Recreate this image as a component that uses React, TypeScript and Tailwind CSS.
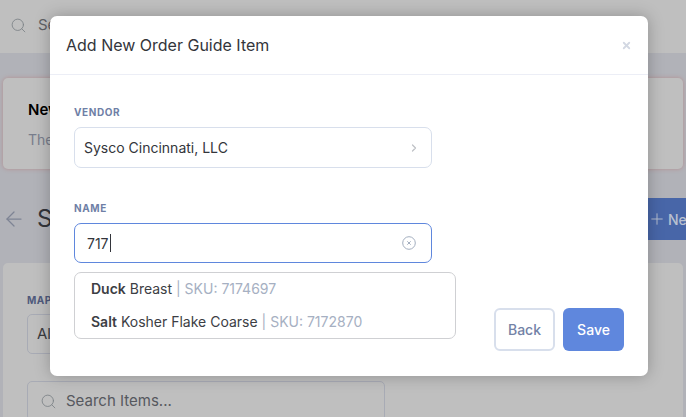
import { Search, ArrowLeft, Plus, ChevronRight, X } from "lucide-react";

const font = { };

function Background() {
  return (
    <div className="h-[417px] w-[686px] overflow-hidden bg-[#b1b2b8] font-['Inter',sans-serif]">
      {/* top search bar */}
      <div className="flex h-[53px] items-center gap-[11px] bg-[#bfbfbf] pb-[2px] pl-[10px]">
        <Search className="h-[17px] w-[17px] text-[#7e8488]" strokeWidth={1.25} />
        <span className="text-[15px] text-[#5f6166]">Search</span>
      </div>

      {/* notice */}
      <div className="mx-[3px] mt-[25px] h-[91px] rounded-[5px] bg-[#bfbfbf] pl-[25px] pt-[22px] shadow-[0_0_4px_#b58f90]">
        <p className="text-[15px] font-semibold leading-5 text-black">New</p>
        <p className="mt-[10px] text-[14px] leading-5 text-[#787d8c]">The</p>
      </div>

      {/* title row */}
      <div className="mt-[30px] flex h-[40px] items-center">
        <ArrowLeft className="ml-[2px] h-[24px] w-[24px] text-[#7e8494]" strokeWidth={1.25} />
        <span className="ml-[11px] text-[24px] text-[#33353a]">S</span>
        <div className="ml-auto flex h-[42px] w-[38px] items-center justify-end gap-[2px] bg-[#4866a8] pr-0 text-[14px] font-medium text-[#b9c0cf]">
          <Plus className="h-[18px] w-[18px] shrink-0 -ml-[2px]" strokeWidth={1.25} />
          <span className="w-[18px] shrink-0 overflow-hidden">New</span>
        </div>
      </div>

      {/* panel */}
      <div className="mx-[3px] mt-[24px] h-[200px] rounded-[5px] bg-[#bfbfbf] pl-[24px] pt-[30px]">
        <p className="text-[10px] font-bold tracking-[0.5px] text-[#4f5a7c]">MAP</p>
        <div className="mt-[6px] flex h-[40px] w-[100px] items-center rounded-[5px] border border-[#a8abb5] pl-[9px] text-[15px] text-[#3a3b3f]">
          All
        </div>
        <div className="mt-[27px] flex h-[40px] w-[358px] items-center gap-[9px] rounded-[5px] border border-[#a8abb5] pl-[12px] text-[15px] text-[#56585e]">
          <Search className="h-[17px] w-[17px] text-[#7e8488]" strokeWidth={1.25} />
          Search Items...
        </div>
      </div>
    </div>
  );
}

function Modal() {
  return (
    <div className="absolute left-[50px] top-[16px] h-[360px] w-[598px] rounded-[7px] bg-white font-['Inter',sans-serif] shadow-[0_0_16px_rgba(0,0,0,0.25)]">
      <div className="flex h-[59px] items-center justify-between border-b border-[#eceef6] pl-[16px] pr-[16px]">
        <h2 className="text-[16px] font-normal text-[#33353b]">Add New Order Guide Item</h2>
        <X className="h-[11px] w-[11px] text-[#d3d8e3]" strokeWidth={4} />
      </div>

      <div className="relative px-[24px] pt-[30px]">
        <label className="block text-[10px] font-bold leading-[14px] tracking-[0.6px] text-[#6f7fa6]">VENDOR</label>
        <div className="mt-[8px] flex h-[41px] w-[358px] items-center justify-between rounded-[7px] border border-[#d8dfec] pl-[9px] pr-[11px] text-[14px] text-[#33353b]">
          Sysco Cincinnati, LLC
          <ChevronRight className="h-[12px] w-[12px] text-[#bfc1c6]" strokeWidth={2.5} />
        </div>

        <label className="mt-[33px] block text-[10px] font-bold leading-[14px] tracking-[0.6px] text-[#6f7fa6]">NAME</label>
        <div className="mt-[8px] flex h-[40px] w-[358px] items-center justify-between rounded-[7px] border border-[#5f87dd] pl-[12px] pr-[15px] text-[14px] text-[#33353b]">
          <span className="flex items-center">
            717<span className="ml-[1px] h-[18px] w-px bg-[#33353b]" />
          </span>
          <svg viewBox="0 0 14 14" className="h-[14px] w-[14px] text-[#a3aebf]" fill="none" stroke="currentColor">
            <circle cx="7" cy="7" r="6.3" strokeWidth="1" />
            <path d="M5.3 5.3l3.4 3.4M8.7 5.3l-3.4 3.4" strokeWidth="1" />
          </svg>
        </div>

        <ul className="mt-[9px] h-[67px] w-[382px] rounded-[7px] border border-[#cfd0d3] pl-[16px] pt-[6px] text-[14px] leading-[20px] text-[#3c3e44]">
          <li>
            <span className="font-semibold">Duck</span> Breast <span className="text-[#a6b0c2]">| SKU: 7174697</span>
          </li>
          <li className="mt-[13px]">
            <span className="font-semibold">Salt</span> Kosher Flake Coarse <span className="text-[#a6b0c2]">| SKU: 7172870</span>
          </li>
        </ul>

        <div className="absolute right-[24px] top-[233px] flex gap-[8px]">
          <button className="h-[43px] w-[61px] rounded-[6px] border-2 border-[#d8dfec] bg-white text-[14px] font-medium text-[#7382a6]">Back</button>
          <button className="h-[43px] w-[61px] rounded-[6px] bg-[#5f87dd] text-[14px] font-medium text-white">Save</button>
        </div>
      </div>
    </div>
  );
}

export default function App() {
  return (
    <div className="relative h-[417px] w-[686px] overflow-hidden">
      <Background />
      <Modal />
    </div>
  );
}
